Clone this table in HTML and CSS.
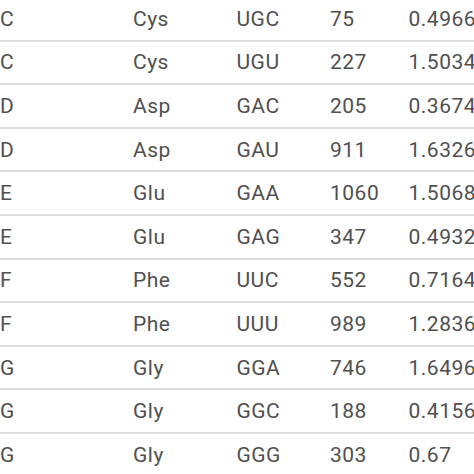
FILE: index.html
```html
<!DOCTYPE html>
<html>
<head>
<meta charset="utf-8">
<link rel="stylesheet" href="styles.css">
</head>
<body>
<table class="codons">
<colgroup>
<col class="c1"><col class="c2"><col class="c3"><col class="c4"><col class="c5">
</colgroup>
<tbody>
<tr><td>C</td><td>Cys</td><td>UGC</td><td>75</td><td>0.4966</td></tr>
<tr><td>C</td><td>Cys</td><td>UGU</td><td>227</td><td>1.5034</td></tr>
<tr><td>D</td><td>Asp</td><td>GAC</td><td>205</td><td>0.3674</td></tr>
<tr><td>D</td><td>Asp</td><td>GAU</td><td>911</td><td>1.6326</td></tr>
<tr><td>E</td><td>Glu</td><td>GAA</td><td>1060</td><td>1.5068</td></tr>
<tr><td>E</td><td>Glu</td><td>GAG</td><td>347</td><td>0.4932</td></tr>
<tr><td>F</td><td>Phe</td><td>UUC</td><td>552</td><td>0.7164</td></tr>
<tr><td>F</td><td>Phe</td><td>UUU</td><td>989</td><td>1.2836</td></tr>
<tr><td>G</td><td>Gly</td><td>GGA</td><td>746</td><td>1.6496</td></tr>
<tr><td>G</td><td>Gly</td><td>GGC</td><td>188</td><td>0.4156</td></tr>
<tr><td>G</td><td>Gly</td><td>GGG</td><td>303</td><td>0.67</td></tr>
</tbody>
</table>
</body>
</html>
```

FILE: styles.css
```css
html, body {
  margin: 0;
  padding: 0;
  background: #ffffff;
  overflow: hidden;
  width: 474px;
  height: 474px;
}

.codons {
  border-collapse: collapse;
  table-layout: fixed;
  width: 474px;
  margin-top: -2px;
  font-family: Roboto, "Liberation Sans", sans-serif;
  font-size: 21px;
  letter-spacing: 0.5px;
  color: #505050;
}

.c1 { width: 133px; }
.c2 { width: 103.5px; }
.c3 { width: 93.5px; }
.c4 { width: 78.5px; }
.c5 { width: 65.5px; }

.codons td {
  padding: 0;
  height: 41.6px;
  vertical-align: middle;
  white-space: nowrap;
  overflow: hidden;
  border-bottom: 2px solid #dedede;
}
```
